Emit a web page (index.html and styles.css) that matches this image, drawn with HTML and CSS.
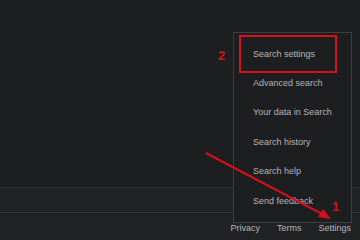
FILE: index.html
```html
<!DOCTYPE html>
<html>
<head>
<meta charset="utf-8">
<link rel="stylesheet" href="styles.css">
</head>
<body>
<div class="page">
  <main class="main"></main>
  <footer class="footer">
    <div class="footer-row country"></div>
    <div class="footer-row links">
      <a class="link">Privacy</a>
      <a class="link">Terms</a>
      <a class="link">Settings</a>
    </div>
  </footer>

  <div class="menu">
    <div class="item">Search settings</div>
    <div class="item">Advanced search</div>
    <div class="item">Your data in Search</div>
    <div class="item">Search history</div>
    <div class="item">Search help</div>
    <div class="item">Send feedback</div>
  </div>

  <div class="highlight"></div>
  <div class="num num-2">2</div>
  <div class="num num-1">1</div>
  <svg class="arrow" width="360" height="240" viewBox="0 0 360 240">
    <line x1="206" y1="153" x2="324" y2="215" stroke="#d4101c" stroke-width="2"/>
    <polygon points="331,219 318,217 323,209" fill="#d4101c"/>
  </svg>
</div>
</body>
</html>
```
FILE: styles.css
```css
html, body {
  margin: 0;
  padding: 0;
  background: #1d1e20;
}
.page {
  position: relative;
  width: 360px;
  height: 240px;
  display: flex;
  flex-direction: column;
  font-family: "Liberation Sans", Arial, sans-serif;
  overflow: hidden;
}
.main {
  height: 187px;
  background: #1d1e20;
}
.footer {
  flex: 1;
  display: flex;
  flex-direction: column;
  background: #212224;
}
.footer-row {
  border-top: 1px solid #2e2f32;
}
.country {
  height: 24px;
}
.links {
  flex: 1;
  display: flex;
  justify-content: flex-end;
  align-items: center;
  gap: 17px;
  padding-right: 9px;
  padding-top: 3px;
}
.link {
  font-size: 9px;
  color: #b4b7bb;
}
.menu {
  position: absolute;
  left: 233px;
  top: 32px;
  width: 117px;
  height: 183px;
  border: 1px solid #3d3e41;
  background: #1d1e20;
  padding-top: 6px;
  box-sizing: content-box;
}
.item {
  height: 29.4px;
  display: flex;
  align-items: center;
  padding-left: 19px;
  font-size: 9px;
  color: #b4b7bb;
  white-space: nowrap;
}
.highlight {
  position: absolute;
  left: 239px;
  top: 35px;
  width: 94px;
  height: 34px;
  border: 2px solid #d6101c;
}
.num {
  position: absolute;
  font-size: 13px;
  font-weight: bold;
  color: #d6101c;
  line-height: 13px;
}
.num-2 {
  left: 218px;
  top: 49px;
}
.num-1 {
  left: 332px;
  top: 200px;
}
.arrow {
  position: absolute;
  left: 0;
  top: 0;
  pointer-events: none;
}
```
